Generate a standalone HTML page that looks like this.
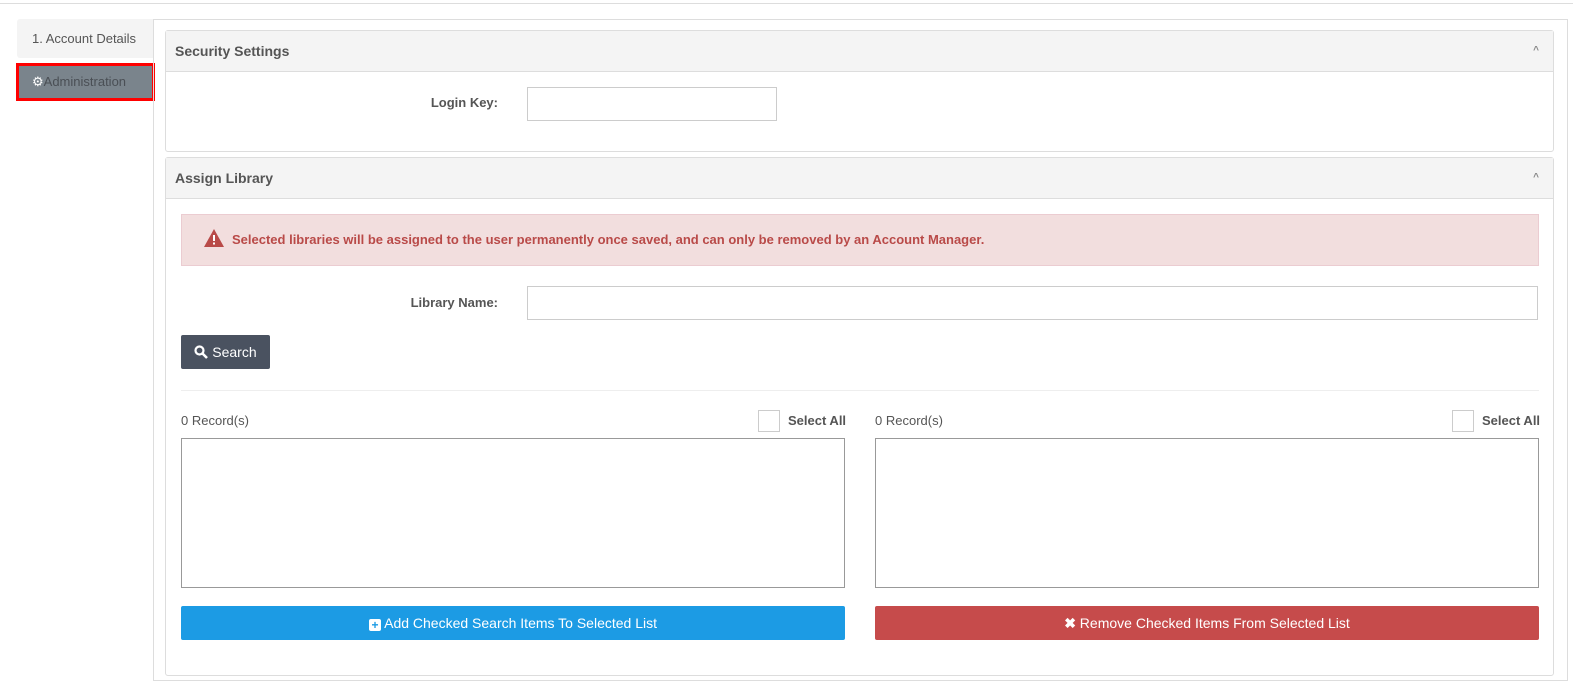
<!DOCTYPE html>
<html><head><style>
*{box-sizing:border-box;margin:0;padding:0}
body{width:1573px;height:680px;background:#fff;font-family:"Liberation Sans",sans-serif;position:relative;overflow:hidden;color:#555}
.a{position:absolute}
.ph{background:#f4f4f4;border-bottom:1px solid #ddd;font-weight:bold;font-size:14px;color:#555;padding-left:9px;line-height:40px}
.car{position:absolute;right:14px;top:0;font-size:10px;color:#888}
.lbl{font-weight:bold;font-size:13px;color:#555;text-align:right}
.inp{border:1px solid #ccc;background:#fff}
.btn{color:#fff;font-size:14px;text-align:center;line-height:34px;border-radius:2px}
</style></head><body>
<div class="a" style="left:0;top:3px;width:1573px;height:1px;background:#ddd"></div>
<div class="a" style="left:17px;top:19px;width:137px;height:39px;background:#f4f4f4;border-radius:3px 0 0 3px;font-size:13px;line-height:39px;padding-left:15px;color:#555">1. Account Details</div>
<div class="a" style="left:16px;top:63px;width:139px;height:38px;background:#7a848c;border:3px solid #f00;font-size:13px;line-height:32px;padding-left:13px;color:#4a4f55"><span style="color:#fff">⚙</span>Administration</div>
<div class="a" style="left:153px;top:19px;width:1415px;height:662px;border:1px solid #ddd"></div>

<div class="a" style="left:165px;top:30px;width:1389px;height:122px;border:1px solid #ddd;border-radius:3px">
 <div class="ph" style="height:41px;position:relative">Security Settings<span class="car">&#94;</span></div>
 <div class="a lbl" style="left:200px;top:64px;width:132px">Login Key:</div>
 <div class="a inp" style="left:361px;top:56px;width:250px;height:34px"></div>
</div>

<div class="a" style="left:165px;top:157px;width:1389px;height:519px;border:1px solid #ddd;border-radius:3px">
 <div class="ph" style="height:41px;position:relative">Assign Library<span class="car">&#94;</span></div>
 <div class="a" style="left:15px;top:56px;width:1358px;height:52px;background:#f2dede;border:1px solid #ebccd1;color:#b94a48;font-weight:bold;font-size:13px;line-height:50px;padding-left:22px">
  <svg width="20" height="18" viewBox="0 0 20 18" style="vertical-align:-3px;margin-right:8px"><path d="M10 0L20 18H0Z" fill="#b94a48"/><rect x="9" y="6" width="2" height="6" fill="#fff"/><rect x="9" y="13.5" width="2" height="2" fill="#fff"/></svg>Selected libraries will be assigned to the user permanently once saved, and can only be removed by an Account Manager.</div>
 <div class="a lbl" style="left:200px;top:137px;width:132px">Library Name:</div>
 <div class="a inp" style="left:361px;top:128px;width:1011px;height:34px"></div>
 <div class="a btn" style="left:15px;top:177px;width:89px;height:34px;background:#4a5260"><svg width="14" height="14" viewBox="0 0 14 14" style="vertical-align:-2px"><circle cx="5.5" cy="5.5" r="4" fill="none" stroke="#fff" stroke-width="2.2"/><path d="M8.5 8.5L13 13" stroke="#fff" stroke-width="2.6"/></svg> Search</div>
 <div class="a" style="left:15px;top:232px;width:1358px;height:1px;background:#eee"></div>
 <div class="a" style="left:15px;top:255px;font-size:13px;color:#555">0 Record(s)</div>
 <div class="a" style="left:592px;top:252px;width:22px;height:22px;border:1px solid #ccc"></div>
 <div class="a lbl" style="left:622px;top:255px">Select All</div>
 <div class="a" style="left:15px;top:280px;width:664px;height:150px;border:1px solid #999"></div>
 <div class="a" style="left:709px;top:255px;font-size:13px;color:#555">0 Record(s)</div>
 <div class="a" style="left:1286px;top:252px;width:22px;height:22px;border:1px solid #ccc"></div>
 <div class="a lbl" style="left:1316px;top:255px">Select All</div>
 <div class="a" style="left:709px;top:280px;width:664px;height:150px;border:1px solid #999"></div>
 <div class="a btn" style="left:15px;top:448px;width:664px;height:34px;background:#1c9be4"><span style="display:inline-block;width:12px;height:12px;background:#fff;border-radius:2px;color:#1c9be4;font-size:12px;line-height:12px;font-weight:bold;vertical-align:-1px">+</span> Add Checked Search Items To Selected List</div>
 <div class="a btn" style="left:709px;top:448px;width:664px;height:34px;background:#c64b4b"><b>✖</b> Remove Checked Items From Selected List</div>
</div>
</body></html>
